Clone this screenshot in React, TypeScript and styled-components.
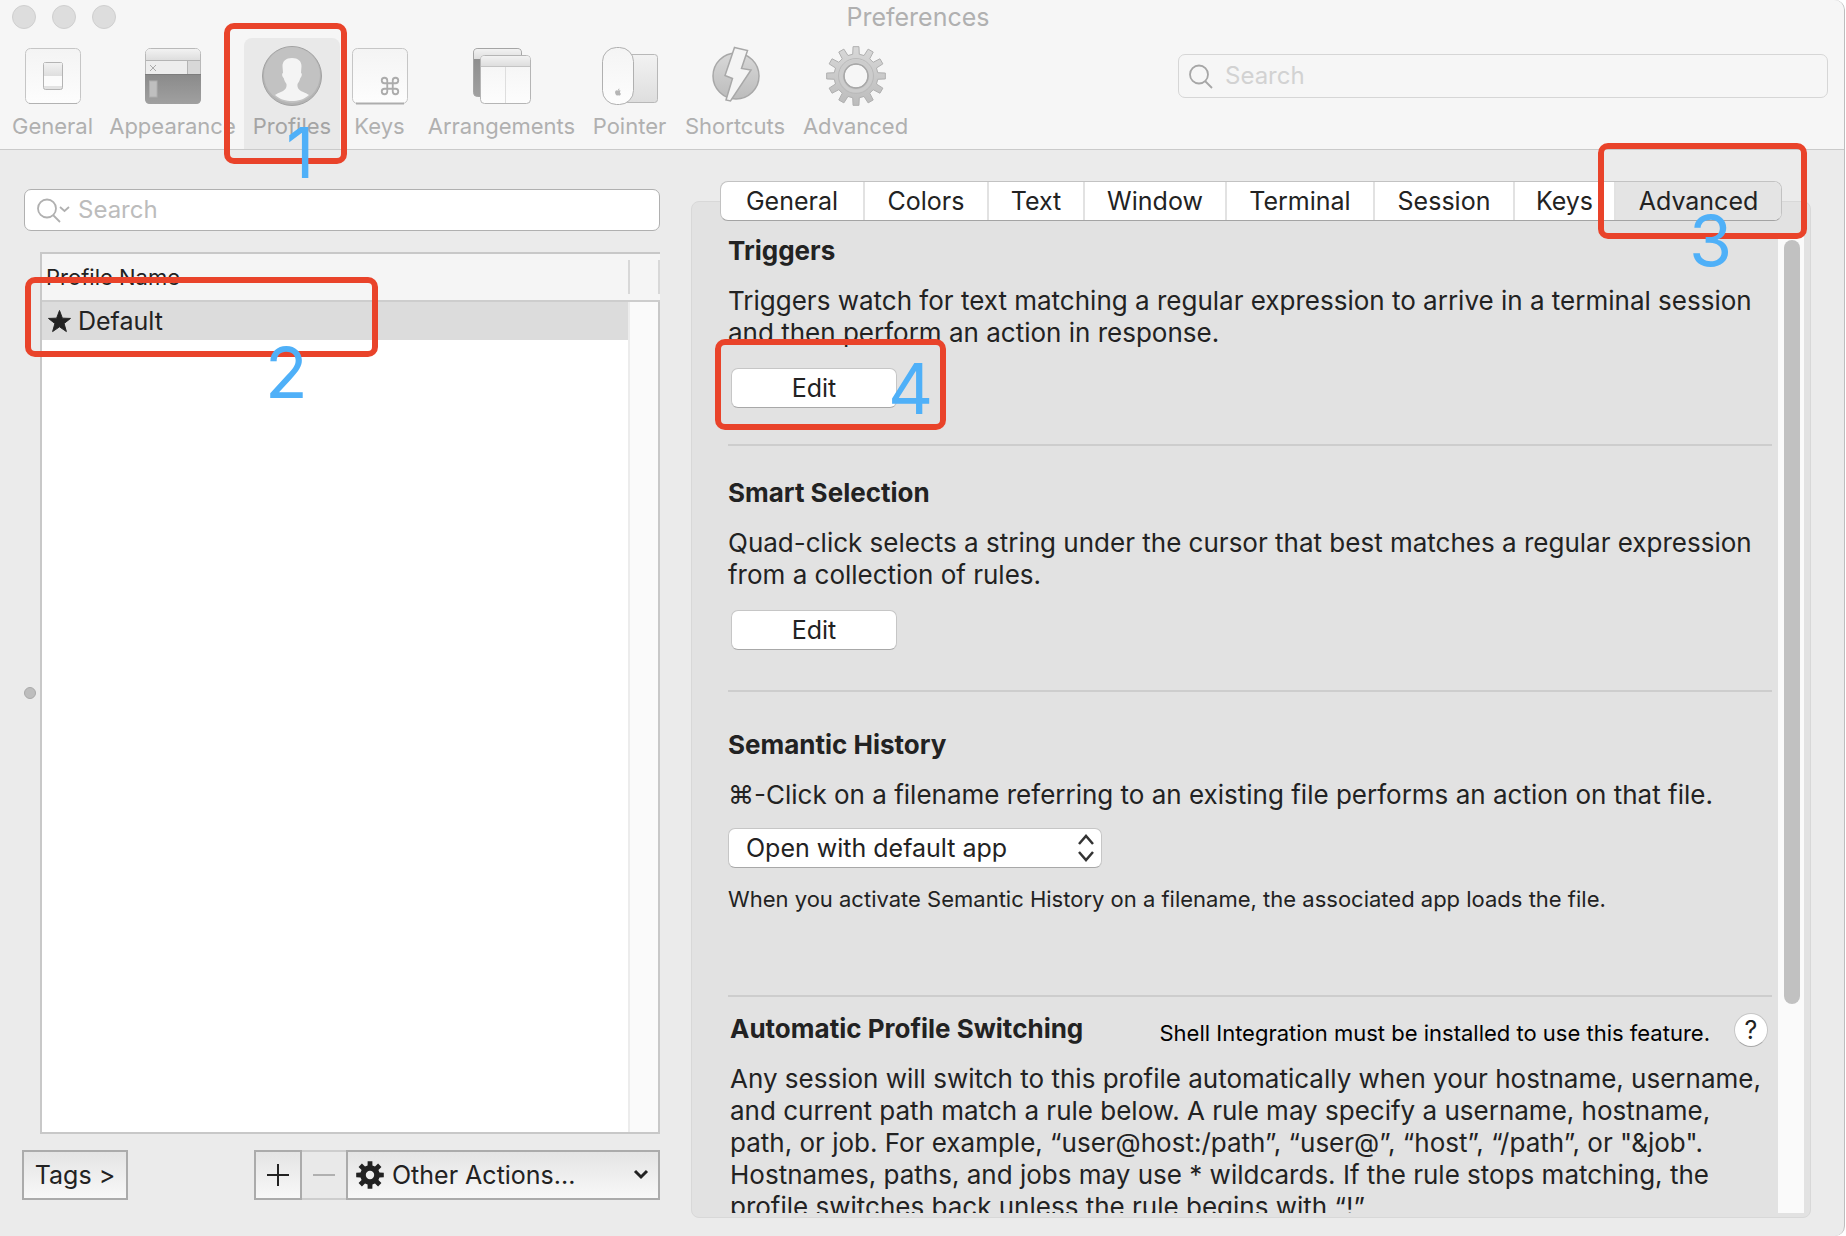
import React from "react";
import styled, { createGlobalStyle } from "styled-components";
import { Command } from "lucide-react";
import { FaApple } from "react-icons/fa";

const GlobalStyle = createGlobalStyle`
  *, *::before, *::after { box-sizing: border-box; }
  body { margin: 0; background: #fff; }
  body, button, input, select {
    font-family: Inter, "Noto Sans", "DejaVu Sans", sans-serif;
    font-size: 25px;
    line-height: 32px;
    color: #222;
  }
  h1, h2, p { margin: 0; }
`;

const Window = styled.div`
  display: flex;
  flex-direction: column;
  height: 100vh;
  min-height: 700px;
  margin-right: 1px;
  background: #ebebeb;
  border-right: 1px solid #bdbdbd;
  border-radius: 0 10px 10px 0;
`;

const Header = styled.header`
  background: #f6f6f6;
  border-bottom: 1px solid #cacaca;
  border-radius: 0 10px 0 0;
`;

const TitleBar = styled.div`
  display: grid;
  grid-template-columns: 1fr auto 1fr;
  align-items: center;
  height: 33px;
  padding: 0 20px 0 12px;
`;

const WindowButtons = styled.div`
  display: flex;
  gap: 16px;
`;

const WindowButton = styled.button`
  width: 24px;
  height: 24px;
  padding: 0;
  border: 1px solid #cfcfcf;
  border-radius: 50%;
  background: #dddddd;
`;

const Title = styled.h1`
  font-size: 25px;
  font-weight: 400;
  line-height: 32px;
  color: #b0b0b0;
`;

const Toolbar = styled.nav`
  display: flex;
  align-items: flex-start;
  padding: 5px 16px 0 4px;
`;

const ToolItem = styled.div<{ $width: number }>`
  position: relative;
  flex: 0 0 ${(p) => p.$width}px;
`;

const ToolButton = styled.button<{ $active?: boolean }>`
  display: flex;
  flex-direction: column;
  align-items: center;
  gap: 6px;
  width: 100%;
  height: 111px;
  padding: 8px 0 0;
  border: 0;
  border-radius: 8px 8px 0 0;
  background: ${(p) => (p.$active ? "#e9e9e9" : "transparent")};
  font-size: 22px;
  line-height: 28px;
  color: ${(p) => (p.$active ? "#a4a4a4" : "#b0b0b0")};
  white-space: nowrap;
  svg { display: block; flex: none; }
`;

const SearchBox = styled.label<{ $toolbar?: boolean }>`
  display: flex;
  align-items: center;
  flex: ${(p) => (p.$toolbar ? "0 1 650px" : "none")};
  height: ${(p) => (p.$toolbar ? 44 : 42)}px;
  margin: ${(p) => (p.$toolbar ? "16px 0 0 auto" : "0")};
  padding-left: ${(p) => (p.$toolbar ? 10 : 12)}px;
  gap: ${(p) => (p.$toolbar ? 10 : 8)}px;
  border: 1px solid ${(p) => (p.$toolbar ? "#d6d6d6" : "#b0b0b0")};
  border-radius: 7px;
  background: ${(p) => (p.$toolbar ? "#f6f6f6" : "#fff")};
  svg { flex: none; }
`;

const SearchInput = styled.input<{ $faint?: boolean }>`
  flex: 1;
  min-width: 0;
  padding: 0;
  border: 0;
  outline: 0;
  background: transparent;
  font-size: 24px;
  &::placeholder { color: ${(p) => (p.$faint ? "#d2d2d2" : "#bcbcbc")}; opacity: 1; }
`;

const Body = styled.main`
  display: grid;
  grid-template-columns: 636px minmax(0, 1fr);
  gap: 31px;
  flex: 1;
  min-height: 0;
  padding: 0 33px 0 24px;
`;

const Sidebar = styled.section`
  display: flex;
  flex-direction: column;
  min-height: 0;
  padding: 39px 0 36px;
`;

const ListRow = styled.div`
  display: flex;
  align-items: center;
  gap: 4px;
  flex: 1;
  min-height: 0;
  margin: 21px 0 16px;
`;

const Grip = styled.span`
  width: 12px;
  height: 12px;
  border: 1px solid #a9a9a9;
  border-radius: 50%;
  background: #bdbdbd;
`;

const ListBox = styled.div`
  position: relative;
  display: flex;
  flex: 1;
  align-self: stretch;
  border: 2px solid #c8c8c8;
  background: #fff;
`;

const ProfileTable = styled.table`
  flex: 1;
  align-self: flex-start;
  border-collapse: separate;
  border-spacing: 0;
  th {
    height: 48px;
    padding: 0 4px;
    border-bottom: 2px solid #cdcdcd;
    background: #f5f5f5;
    font-size: 22px;
    font-weight: 400;
    line-height: 28px;
    text-align: left;
  }
  td {
    height: 38px;
    padding: 0 6px;
    background: #dcdcdc;
  }
`;

const ProfileCell = styled.div`
  display: flex;
  align-items: center;
  gap: 7px;
`;

const ListTrack = styled.div`
  width: 30px;
  border-left: 2px solid #ececec;
  background: #fafafa;
`;

const TrackHead = styled.div`
  height: 48px;
  padding: 6px 0;
  margin: 0 -2px;
  border-bottom: 2px solid #cdcdcd;
  background: #f5f5f5;
  &::before {
    content: "";
    display: block;
    height: 34px;
    border: solid #d8d8d8;
    border-width: 0 2px;
  }
`;

const Footer = styled.div`
  display: flex;
  justify-content: space-between;
  margin-left: -2px;
`;

const Group = styled.div`
  display: flex;
`;

const SquareButton = styled.button<{ $width: number }>`
  display: flex;
  align-items: center;
  justify-content: center;
  width: ${(p) => p.$width}px;
  height: 50px;
  padding: 0;
  border: 2px solid #ababab;
  background: linear-gradient(#e4e4e4, #f8f8f8);
  &:disabled {
    border-color: #cdcdcd;
    border-width: 2px 0;
    background: #e9e9e9;
  }
`;

const SelectWrap = styled.div<{ $width: number }>`
  position: relative;
  width: ${(p) => p.$width}px;
`;

const SelectIcon = styled.span<{ $side: "left" | "right"; $inset: number }>`
  position: absolute;
  top: 0;
  bottom: 0;
  ${(p) => p.$side}: ${(p) => p.$inset}px;
  display: flex;
  align-items: center;
  pointer-events: none;
`;

const ActionSelect = styled.select`
  appearance: none;
  display: block;
  width: 100%;
  height: 50px;
  padding: 0 40px 0 44px;
  border: 2px solid #ababab;
  border-radius: 0;
  background: linear-gradient(#e4e4e4, #f8f8f8);
`;

const Detail = styled.section`
  display: flex;
  flex-direction: column;
  min-height: 0;
  padding: 31px 0 18px;
`;

const Tabs = styled.div`
  position: relative;
  z-index: 2;
  align-self: center;
  display: flex;
  height: 40px;
  border: 1px solid #c2c2c2;
  border-bottom-color: #a4a4a4;
  border-radius: 8px;
  background: #fff;
`;

const Tab = styled.button<{ $width: number; $active?: boolean }>`
  width: ${(p) => p.$width}px;
  padding: 0;
  border: 0;
  border-left: 2px solid #e2e2e2;
  background: ${(p) => (p.$active ? "#e4e4e4" : "transparent")};
  &:first-child { border-left: 0; }
  &:last-of-type { border-radius: 0 7px 7px 0; }
`;

const Panel = styled.div`
  display: grid;
  grid-template-columns: minmax(0, 1fr) 26px;
  flex: 1;
  min-height: 0;
  margin-top: -20px;
  padding: 33px 6px 4px 0;
  border: 1px solid #d8d8d8;
  border-radius: 8px;
  background: #e2e2e2;
`;

const Scroller = styled.div`
  min-height: 0;
  padding: 0 6px 0 36px;
  overflow: hidden;
`;

const ScrollTrack = styled.div`
  padding: 5px 4px 0 6px;
  background: #fafafa;
`;

const ScrollThumb = styled.div`
  height: 78.5%;
  border-radius: 8px;
  background: #c1c1c1;
`;

const Section = styled.section<{ $top: number; $bottom: number; $inset?: boolean }>`
  padding: ${(p) => p.$top}px 0 ${(p) => p.$bottom}px ${(p) => (p.$inset ? 2 : 0)}px;
  & + & { border-top: 2px solid #cdcdcd; }
`;

const Heading = styled.h2`
  font-size: 26px;
  font-weight: 700;
  line-height: 32px;
  white-space: nowrap;
`;

const Text = styled.p`
  margin-top: 18px;
  font-size: 26px;
  white-space: nowrap;
`;

const Hint = styled.p<{ $dark?: boolean }>`
  font-size: 22px;
  line-height: 28px;
  color: ${(p) => (p.$dark ? "#000" : "#222")};
  white-space: nowrap;
`;

const ButtonSlot = styled.div`
  position: relative;
  width: 166px;
  margin: 19px 0 0 3px;
`;

const PushButton = styled.button`
  display: block;
  width: 100%;
  height: 40px;
  padding: 0;
  border: 1px solid #c6c6c6;
  border-bottom-color: #a8a8a8;
  border-radius: 7px;
  background: #fff;
`;

const PopupSelect = styled.select`
  appearance: none;
  display: block;
  width: 100%;
  height: 40px;
  margin: 17px 0;
  padding: 0 40px 0 17px;
  border: 1px solid #c6c6c6;
  border-bottom-color: #a8a8a8;
  border-radius: 7px;
  background: #fff;
`;

const SwitchingHead = styled.div`
  display: flex;
  align-items: flex-start;
  justify-content: space-between;
  padding-right: 4px;
  height: 32px;
`;

const HelpGroup = styled.div`
  display: flex;
  align-items: flex-end;
  gap: 24px;
`;

const HelpButton = styled.button`
  width: 34px;
  height: 34px;
  padding: 0;
  border: 1px solid #c6c6c6;
  border-bottom-color: #a8a8a8;
  border-radius: 50%;
  background: #fff;
`;

const Callout = styled.div<{ $x: number; $y: number; $w: number; $h: number }>`
  position: absolute;
  z-index: 5;
  left: ${(p) => p.$x}px;
  top: ${(p) => p.$y}px;
  width: ${(p) => p.$w}px;
  height: ${(p) => p.$h}px;
  border: 6px solid #e9432a;
  border-radius: 10px;
  pointer-events: none;
`;

const Step = styled.span<{ $x: number; $y: number }>`
  position: absolute;
  left: ${(p) => p.$x}px;
  top: ${(p) => p.$y}px;
  font-size: 70px;
  font-weight: 400;
  line-height: 70px;
  color: #4fb0f8;
`;

function gearPath(teeth: number, outer: number, inner: number, top: number, base: number, hole: number) {
  const pts: string[] = [];
  for (let i = 0; i < teeth; i++) {
    const a = (i * 2 * Math.PI) / teeth - Math.PI / 2;
    ([[inner, -base], [outer, -top], [outer, top], [inner, base]] as const).forEach(([r, d]) => {
      pts.push(`${(30 + r * Math.cos(a + d)).toFixed(2)} ${(30 + r * Math.sin(a + d)).toFixed(2)}`);
    });
  }
  return `M${pts.join("L")}ZM${30 - hole} 30a${hole} ${hole} 0 1 0 ${hole * 2} 0a${hole} ${hole} 0 1 0 ${-hole * 2} 0Z`;
}

const Defs = () => (
  <defs>
    <linearGradient id="light" x1="0" y1="0" x2="0" y2="1">
      <stop offset="0" stopColor="#f4f4f4" />
      <stop offset="1" stopColor="#fdfdfd" />
    </linearGradient>
    <linearGradient id="bar" x1="0" y1="0" x2="0" y2="1">
      <stop offset="0" stopColor="#f2f2f2" />
      <stop offset="1" stopColor="#dedede" />
    </linearGradient>
    <linearGradient id="mid" x1="0" y1="0" x2="0" y2="1">
      <stop offset="0" stopColor="#d8d8d8" />
      <stop offset="1" stopColor="#bcbcbc" />
    </linearGradient>
    <linearGradient id="dark" x1="0" y1="0" x2="0" y2="1">
      <stop offset="0" stopColor="#8a8a8a" />
      <stop offset="1" stopColor="#a0a0a0" />
    </linearGradient>
  </defs>
);

const Icon = ({ children }: { children: React.ReactNode }) => (
  <svg width="60" height="60" viewBox="0 0 60 60" fill="none" aria-hidden="true">
    <Defs />
    {children}
  </svg>
);

const GeneralIcon = () => (
  <Icon>
    <rect x="2.5" y="2.5" width="55" height="55" rx="5" fill="url(#light)" stroke="#c6c6c6" />
    <path d="M6 57.5h48" stroke="#b2b2b2" />
    <rect x="20.5" y="16.5" width="19" height="27" rx="2" fill="#e2e2e2" stroke="#b4b4b4" />
    <path d="M21 17h18v13H21z" fill="url(#bar)" />
    <path d="M21 30h18v10H21z" fill="#fbfbfb" />
  </Icon>
);

const AppearanceIcon = () => (
  <Icon>
    <rect x="2.5" y="2.5" width="55" height="55" rx="5" fill="#ededed" stroke="#b9b9b9" />
    <path d="M3 14V7q0-4 4-4h46q4 0 4 4v7z" fill="url(#bar)" />
    <path d="M3 14.5h54" stroke="#b4b4b4" />
    <path d="M45 15h12v13H45z" fill="#d8d8d8" />
    <path d="M44.5 15v13" stroke="#b4b4b4" />
    <path d="M7 19l6 6M13 19l-6 6" stroke="#aaa" />
    <path d="M2 28h56v25q0 5-5 5H7q-5 0-5-5z" fill="url(#dark)" />
    <path d="M2 28.5h56" stroke="#7d7d7d" />
    <rect x="6.5" y="35" width="7.5" height="16" fill="#bfbfbf" stroke="#aeaeae" />
  </Icon>
);

const ProfilesIcon = () => (
  <Icon>
    <circle cx="30" cy="30" r="29.5" fill="#b4b4b4" stroke="#a2a2a2" />
    <circle cx="30" cy="29" r="28" fill="#c2c2c2" />
    <path
      d="M30 12C36 12 39.500 15 39.500 20L39 27C40.500 27.500 39.800 31 38.300 32C37.800 34.500 36.500 36.500 35.500 38C35 42 37 44 40 45.500C43 46.800 45.500 47.800 47 49C42 53.500 36 55 30 55C24 55 18 53.500 13 49C14.500 47.800 17 46.800 20 45.500C23 44 25 42 24.500 38C23.500 36.500 22.200 34.500 21.700 32C20.200 31 19.500 27.500 21 27L20.500 20C20.500 15 24 12 30 12Z"
      fill="#f4f4f4"
    />
  </Icon>
);

const KeysIcon = () => (
  <Icon>
    <rect x="2.5" y="2.5" width="55" height="55" rx="5" fill="url(#light)" stroke="#c6c6c6" />
    <path d="M6 57.5h48" stroke="#adadad" strokeWidth="2" />
    <Command x={29} y={29} width={22} height={22} color="#acacac" strokeWidth={2} />
  </Icon>
);

const ArrangementsIcon = () => (
  <Icon>
    <rect x="1.5" y="2.5" width="48" height="48" rx="4" fill="url(#dark)" stroke="#a5a5a5" />
    <path d="M2 13V6q0-3 3-3h41q3 0 3 3v7z" fill="url(#bar)" />
    <rect x="8.5" y="9.5" width="50" height="48" rx="4" fill="url(#light)" stroke="#b5b5b5" />
    <path d="M9 20v-7q0-3 3-3h43q3 0 3 3v7z" fill="url(#bar)" />
    <path d="M9 20.5h49" stroke="#c4c4c4" />
    <path d="M33.5 21v36" stroke="#dedede" />
  </Icon>
);

const PointerIcon = () => (
  <Icon>
    <rect x="12.5" y="8.5" width="45" height="48" rx="3" fill="url(#bar)" stroke="#b8b8b8" />
    <rect x="2.5" y="1.5" width="31" height="57" rx="14" fill="url(#light)" stroke="#b0b0b0" />
    <FaApple x={14} y={42} size={8} color="#b5b5b5" />
  </Icon>
);

const ShortcutsIcon = () => (
  <Icon>
    <circle cx="31" cy="30" r="23" fill="url(#mid)" stroke="#a8a8a8" strokeWidth="1.5" />
    <path
      d="M29.5 1.5L42.5 4.5L36.5 22.5L46 24L25.5 55L21 54L27.5 32.5L20 29.5Z"
      fill="#f4f4f4"
      stroke="#a8a8a8"
      strokeWidth="1.5"
    />
  </Icon>
);

const AdvancedIcon = () => (
  <Icon>
    <path d={gearPath(12, 29.5, 22, 0.1, 0.15, 12)} fill="url(#mid)" fillRule="evenodd" stroke="#b0b0b0" strokeLinejoin="round" />
    <circle cx="30" cy="30" r="17.5" stroke="#bababa" />
    <circle cx="30" cy="30" r="15" stroke="#cccccc" strokeWidth="3" />
    <circle cx="30" cy="30" r="12" stroke="#a8a8a8" strokeWidth="1.5" />
  </Icon>
);

const SearchIcon = ({ menu }: { menu?: boolean }) => (
  <svg width={menu ? 33 : 26} height="26" viewBox={menu ? "0 0 33 26" : "0 0 26 26"} fill="none" stroke={menu ? "#b0b0b0" : "#a6a6a6"} strokeWidth="1.8" aria-hidden="true">
    <circle cx="10" cy="11.5" r="9" />
    <path d="M16 18l7 7" />
    {menu && <path d="M23 10l4.5 4L32 10" />}
  </svg>
);

const tools = [
  { label: "General", width: 97, icon: <GeneralIcon /> },
  { label: "Appearance", width: 143, icon: <AppearanceIcon /> },
  { label: "Profiles", width: 96, icon: <ProfilesIcon />, active: true },
  { label: "Keys", width: 79, icon: <KeysIcon /> },
  { label: "Arrangements", width: 165, icon: <ArrangementsIcon /> },
  { label: "Pointer", width: 91, icon: <PointerIcon /> },
  { label: "Shortcuts", width: 120, icon: <ShortcutsIcon /> },
  { label: "Advanced", width: 121, icon: <AdvancedIcon /> },
];

const tabs = [
  { label: "General", width: 142 },
  { label: "Colors", width: 124 },
  { label: "Text", width: 96 },
  { label: "Window", width: 142 },
  { label: "Terminal", width: 148 },
  { label: "Session", width: 140 },
  { label: "Keys", width: 101 },
  { label: "Advanced", width: 167, active: true },
];

export default function App() {
  return (
    <>
      <GlobalStyle />
      <Window>
        <Header>
          <TitleBar>
            <WindowButtons>
              <WindowButton aria-label="Close" />
              <WindowButton aria-label="Minimize" />
              <WindowButton aria-label="Zoom" />
            </WindowButtons>
            <Title>Preferences</Title>
          </TitleBar>
          <Toolbar>
            {tools.map((t) => (
              <ToolItem key={t.label} $width={t.width}>
                <ToolButton $active={t.active}>
                  {t.icon}
                  {t.label}
                </ToolButton>
                {t.active && (
                  <Callout $x={-20} $y={-15} $w={123} $h={141}>
                    <Step $x={56} $y={89}>1</Step>
                  </Callout>
                )}
              </ToolItem>
            ))}
            <SearchBox $toolbar>
              <SearchIcon />
              <SearchInput $faint placeholder="Search" aria-label="Search preferences" />
            </SearchBox>
          </Toolbar>
        </Header>

        <Body>
          <Sidebar>
            <SearchBox>
              <SearchIcon menu />
              <SearchInput placeholder="Search" aria-label="Search profiles" />
            </SearchBox>
            <ListRow>
              <Grip />
              <ListBox>
                <ProfileTable>
                  <thead>
                    <tr><th scope="col">Profile Name</th></tr>
                  </thead>
                  <tbody>
                    <tr>
                      <td>
                        <ProfileCell>
                          <svg width="23" height="23" viewBox="0 0 24 24" fill="#222" stroke="#222" strokeLinejoin="round" aria-hidden="true">
                            <path d="M12 .5l3 8 8.500.3-6.700 5.300 2.400 8.400-7.200-4.900-7.200 4.900 2.400-8.400L.5 8.800 9 8.500z" />
                          </svg>
                          Default
                        </ProfileCell>
                      </td>
                    </tr>
                  </tbody>
                </ProfileTable>
                <ListTrack><TrackHead /></ListTrack>
                <Callout $x={-17} $y={23} $w={353} $h={80}>
                  <Step $x={234} $y={55}>2</Step>
                </Callout>
              </ListBox>
            </ListRow>
            <Footer>
              <SquareButton $width={106}>Tags &gt;</SquareButton>
              <Group>
                <SquareButton $width={48} aria-label="Add profile">
                  <svg width="22" height="22" stroke="#222" strokeWidth="2"><path d="M11 0v22M0 11h22" /></svg>
                </SquareButton>
                <SquareButton $width={44} disabled aria-label="Remove profile">
                  <svg width="22" height="22" stroke="#b0b0b0" strokeWidth="2"><path d="M0 11h22" /></svg>
                </SquareButton>
                <SelectWrap $width={314}>
                  <ActionSelect aria-label="Other actions">
                    <option>Other Actions...</option>
                  </ActionSelect>
                  <SelectIcon $side="left" $inset={10}>
                    <svg width="28" height="28" viewBox="0 0 60 60" fill="#222">
                      <path d={gearPath(8, 30, 21, 0.17, 0.25, 9)} fillRule="evenodd" />
                    </svg>
                  </SelectIcon>
                  <SelectIcon $side="right" $inset={11}>
                    <svg width="16" height="12" fill="none" stroke="#222" strokeWidth="3"><path d="M2 2l6 6 6-6" /></svg>
                  </SelectIcon>
                </SelectWrap>
              </Group>
            </Footer>
          </Sidebar>

          <Detail>
            <Tabs role="tablist">
              {tabs.map((t) => (
                <Tab key={t.label} role="tab" aria-selected={!!t.active} $width={t.width} $active={t.active}>
                  {t.label}
                </Tab>
              ))}
              <Callout $x={877} $y={-39} $w={209} $h={96}>
                <Step $x={85} $y={57}>3</Step>
              </Callout>
            </Tabs>
            <Panel>
              <Scroller>
                <Section $top={0} $bottom={36}>
                  <Heading>Triggers</Heading>
                  <Text>
                    Triggers watch for text matching a regular expression to arrive in a terminal session<br />
                    and then perform an action in response.
                  </Text>
                  <ButtonSlot>
                    <PushButton>Edit</PushButton>
                    <Callout $x={-16} $y={-29} $w={231} $h={91}>
                      <Step $x={167} $y={9}>4</Step>
                    </Callout>
                  </ButtonSlot>
                </Section>
                <Section $top={31} $bottom={40}>
                  <Heading>Smart Selection</Heading>
                  <Text>
                    Quad-click selects a string under the cursor that best matches a regular expression<br />
                    from a collection of rules.
                  </Text>
                  <ButtonSlot>
                    <PushButton>Edit</PushButton>
                  </ButtonSlot>
                </Section>
                <Section $top={37} $bottom={82}>
                  <Heading>Semantic History</Heading>
                  <Text>⌘-Click on a filename referring to an existing file performs an action on that file.</Text>
                  <SelectWrap $width={374}>
                    <PopupSelect aria-label="Semantic history action">
                      <option>Open with default app</option>
                    </PopupSelect>
                    <SelectIcon $side="right" $inset={8}>
                      <svg width="16" height="28" fill="none" stroke="#333" strokeWidth="2.5"><path d="M1 10l7-8 7 8M1 18l7 8 7-8" /></svg>
                    </SelectIcon>
                  </SelectWrap>
                  <Hint>When you activate Semantic History on a filename, the associated app loads the file.</Hint>
                </Section>
                <Section $top={16} $bottom={20} $inset>
                  <SwitchingHead>
                    <Heading>Automatic Profile Switching</Heading>
                    <HelpGroup>
                      <Hint $dark>Shell Integration must be installed to use this feature.</Hint>
                      <HelpButton aria-label="Help">?</HelpButton>
                    </HelpGroup>
                  </SwitchingHead>
                  <Text>
                    Any session will switch to this profile automatically when your hostname, username,<br />
                    and current path match a rule below. A rule may specify a username, hostname,<br />
                    path, or job. For example, “user@host:/path”, “user@”, “host”, “/path”, or "&amp;job".<br />
                    Hostnames, paths, and jobs may use * wildcards. If the rule stops matching, the<br />
                    profile switches back unless the rule begins with “!”
                  </Text>
                </Section>
              </Scroller>
              <ScrollTrack><ScrollThumb /></ScrollTrack>
            </Panel>
          </Detail>
        </Body>
      </Window>
    </>
  );
}
